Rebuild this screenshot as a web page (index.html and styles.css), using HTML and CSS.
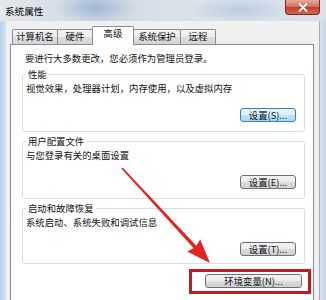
FILE: index.html
```html
<!DOCTYPE html>
<html lang="zh-CN">
<head>
<meta charset="utf-8">
<title>系统属性</title>
<link rel="stylesheet" href="styles.css">
</head>
<body>
<div class="window">
  <div class="titlebar">
    <span class="title">系统属性</span>
    <span class="close">
      <svg width="10" height="9" viewBox="0 0 10 9"><path d="M1.5 1 L8.5 8 M8.5 1 L1.5 8" stroke="#5a1a12" stroke-width="3" stroke-linecap="round" opacity="0.35"/><path d="M1.5 1 L8.5 8 M8.5 1 L1.5 8" stroke="#fff" stroke-width="2" stroke-linecap="round"/></svg>
    </span>
  </div>
  <div class="frame-body">
    <div class="frame-left"></div>
    <div class="client">
      <div class="tabs">
        <div class="tab t1">计算机名</div>
        <div class="tab t2">硬件</div>
        <div class="tab t3 selected">高级</div>
        <div class="tab t4">系统保护</div>
        <div class="tab t5">远程</div>
      </div>
      <div class="panel">
        <p class="intro">要进行大多数更改，您必须作为管理员登录。</p>
        <fieldset class="group">
          <legend>性能</legend>
          <p class="desc">视觉效果，处理器计划，内存使用，以及虚拟内存</p>
          <div class="btn-row"><button class="btn default">设置(S)...</button></div>
        </fieldset>
        <fieldset class="group spaced">
          <legend>用户配置文件</legend>
          <p class="desc">与您登录有关的桌面设置</p>
          <div class="btn-row"><button class="btn">设置(E)...</button></div>
        </fieldset>
        <fieldset class="group spaced last">
          <legend>启动和故障恢复</legend>
          <p class="desc">系统启动、系统失败和调试信息</p>
          <div class="btn-row"><button class="btn">设置(T)...</button></div>
        </fieldset>
        <div class="env-row"><button class="btn env">环境变量(N)...</button></div>
      </div>
    </div>
    <div class="frame-right"></div>
  </div>
  <div class="annot-box"></div>
  <svg class="arrow" width="326" height="300" viewBox="0 0 326 300">
    <polygon fill="#e3241f" points="122.7,167.4 196.3,245.8 200.2,239.4 210,263 187.2,251.4 193.7,248.2 121.3,168.6"/>
  </svg>
</div>
</body>
</html>
```

FILE: styles.css
```css
body {
  margin: 0;
  width: 326px;
  height: 300px;
  overflow: hidden;
  font-family: "Noto Sans CJK SC", "Noto Sans", sans-serif;
  font-size: 9.4px;
  color: #111;
}

.window {
  position: relative;
  width: 326px;
  height: 300px;
  overflow: hidden;
  background:
    radial-gradient(ellipse 40px 14px at 95px 8px, rgba(120,160,205,0.55), rgba(120,160,205,0) 100%),
    radial-gradient(ellipse 50px 14px at 240px 10px, rgba(140,175,215,0.45), rgba(140,175,215,0) 100%),
    linear-gradient(to right, #e4e8ed, #ccd6e2 30%, #d9e0e8 50%, #dde4ec 75%, #d7dfe9);
}

.titlebar {
  display: flex;
  height: 21px;
}

.title {
  flex: 1;
  padding: 5px 0 0 5px;
  line-height: 12px;
  font-size: 9.6px;
  color: #000;
}

.close {
  box-sizing: border-box;
  width: 35px;
  height: 15px;
  margin-right: 6px;
  border: 1px solid #7a2c22;
  border-top: none;
  border-radius: 0 0 4px 4px;
  background: linear-gradient(#e8a797, #d77561 45%, #c3432d 52%, #d2654c 100%);
  display: flex;
  align-items: center;
  justify-content: center;
}

.frame-body {
  display: flex;
  height: 279px;
}

.frame-left {
  width: 6px;
  background: linear-gradient(to right, #b7cfe9, #d3e2f1);
}

.client {
  box-sizing: border-box;
  width: 314px;
  background: #f0f0f0;
  padding: 5px 5px 0 4px;
}

.frame-right {
  width: 6px;
  border-left: 1px solid #9fadbd;
  background: linear-gradient(to right, #dbe3ec, #c6d4e4);
}

.tabs {
  display: flex;
  align-items: flex-end;
  margin-left: 2px;
}

.tab {
  box-sizing: border-box;
  height: 15px;
  margin-left: -1px;
  border: 1px solid #898c95;
  border-bottom: none;
  border-radius: 2px 2px 0 0;
  background: linear-gradient(#f4f4f4, #ebebeb 50%, #dedede 50%, #d4d4d4);
  text-align: center;
  line-height: 13px;
  white-space: nowrap;
}

.t1 { width: 46px; margin-left: 0; }
.t2 { width: 36px; }
.t3 { width: 42px; }
.t4 { width: 48px; }
.t5 { width: 36px; }

.tab.selected {
  position: relative;
  z-index: 2;
  height: 19px;
  margin-bottom: -1px;
  background: #fff;
  line-height: 13px;
  padding-bottom: 5px;
}

.panel {
  box-sizing: border-box;
  height: 300px;
  background: #fff;
  border: 1px solid #898c95;
  padding: 0 8px 0 11px;
}

.intro {
  margin: 7px 0 5px 3px;
  line-height: 12px;
}

.group {
  margin: 0;
  border: 1px solid #d5dfe5;
  border-radius: 3px;
  padding: 0 8px 9px 3px;
}

.group.spaced {
  margin-top: 4px;
}

.group.last {
  padding-bottom: 7px;
}

.group legend {
  padding: 0 2px;
  line-height: 11px;
}

.desc {
  margin: 2px 0 0;
  line-height: 12px;
}

.btn-row {
  display: flex;
  justify-content: flex-end;
  margin-top: 14px;
}

.btn {
  box-sizing: border-box;
  width: 56px;
  height: 14px;
  padding: 0;
  border: 1px solid #707070;
  border-radius: 3px;
  background: linear-gradient(#f2f2f2, #ebebeb 50%, #dddddd 50%, #cfcfcf);
  font: inherit;
  font-size: 9.4px;
  line-height: 12px;
  color: #111;
  text-align: center;
}

.btn.default {
  border-color: #3c7fb1;
  background: linear-gradient(#eaf6fd, #d9f0fc 50%, #bee6fd 50%, #a7d9f5);
}

.env-row {
  display: flex;
  justify-content: flex-end;
  margin-top: 10px;
  padding-right: 3px;
}

.btn.env {
  width: 97px;
}

.annot-box {
  position: absolute;
  left: 189px;
  top: 269px;
  box-sizing: border-box;
  width: 122px;
  height: 25px;
  border: 3px solid #bf1c22;
}

.arrow {
  position: absolute;
  left: 0;
  top: 0;
  pointer-events: none;
}
```
